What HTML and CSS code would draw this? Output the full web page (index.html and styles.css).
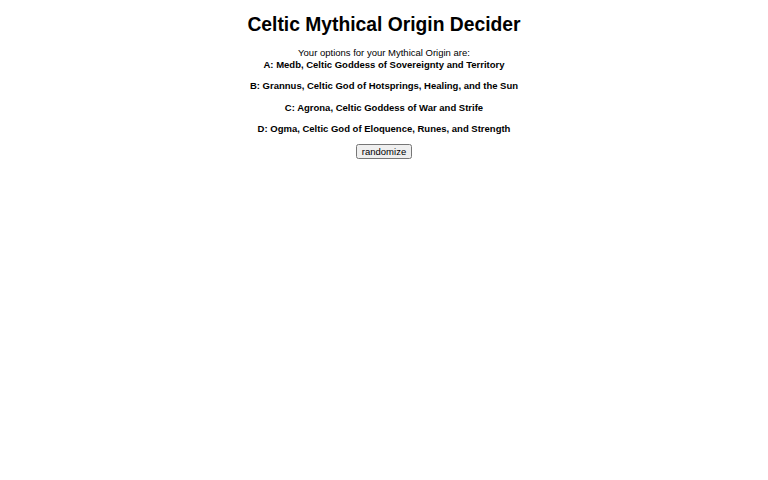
FILE: index.html
```html
<!DOCTYPE html>
<html lang="en">
<head>
  <meta charset="UTF-8">
  <title>Celtic Mythical Origin Decider</title>
  <link rel="stylesheet" href="styles.css">
</head>
<body>

  <h1>Celtic Mythical Origin Decider</h1>

  <div class="options">
    <p>Your options for your Mythical Origin are:<br>
      <b>A: Medb, Celtic Goddess of Sovereignty and Territory</b></p>
    <p><b>B: Grannus, Celtic God of Hotsprings, Healing, and the Sun</b></p>
    <p><b>C: Agrona, Celtic Goddess of War and Strife</b></p>
    <p class="last"><b>D: Ogma, Celtic God of Eloquence, Runes, and Strength</b></p>
    <button onclick="randomize()">randomize</button>
  </div>

  <script>
    function randomize() {
      const picks = ['A', 'B', 'C', 'D'];
      alert('Your origin is ' + picks[Math.floor(Math.random() * 4)]);
    }
  </script>

</body>
</html>
```

FILE: styles.css
```css
body {
  margin: 0;
  font-family: 'Liberation Sans', Arial, sans-serif;
  text-align: center;
  color: #000;
  background-color: #fff;
}

h1 {
  font-size: 19.3px;
  line-height: 23px;
  margin: 13px 0 11px;
}

.options {
  font-size: 9.5px;
  line-height: 11.5px;
}

.options p {
  margin: 0 0 10px;
}

.options p.last {
  margin-bottom: 9px;
}

.options button {
  font-family: 'Liberation Sans', Arial, sans-serif;
  font-size: 9.5px;
  line-height: 11px;
  padding: 0 4px;
}
```
